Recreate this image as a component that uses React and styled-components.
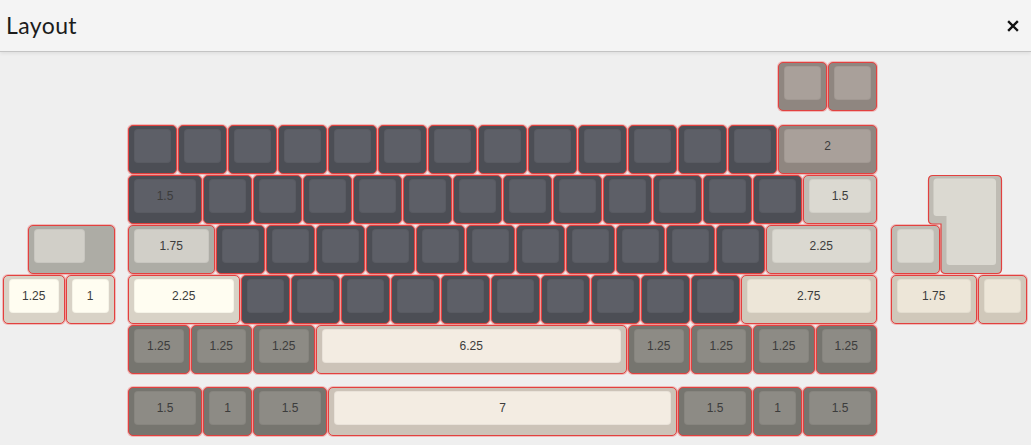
import React from 'react';
import styled, { createGlobalStyle } from 'styled-components';

const U = 50;
const X0 = 3;
const Y0 = 10;

const colors = {
  dark: { side: '#4c4e55', top: '#5d5f67' },
  taupe: { side: '#8f8680', top: '#a9a09a' },
  light: { side: '#bfbcb4', top: '#dbd9d1' },
  gray: { side: '#adaca5', top: '#d1cfc8' },
  cream: { side: '#d8d2c6', top: '#fffdf1' },
  beige: { side: '#d0c8ba', top: '#ede6d8' },
  mod: { side: '#76756f', top: '#8d8b85' },
  space: { side: '#ccc3b8', top: '#f3ece2' },
};

const row = (y, x0, list) => {
  let x = x0;
  return list.map(([w, color, label]) => {
    const k = { x, y, w, h: 1, color, label };
    x += w;
    return k;
  });
};

const darks = (n) => Array.from({ length: n }, () => [1, 'dark']);

const keys = [
  ...row(0, 15.5, [[1, 'taupe'], [1, 'taupe']]),
  ...row(1.25, 2.5, [...darks(13), [2, 'taupe', '2']]),
  ...row(2.25, 2.5, [[1.5, 'dark', '1.5'], ...darks(12), [1.5, 'light', '1.5']]),
  ...row(3.25, 2.5, [[1.75, 'gray', '1.75'], ...darks(11), [2.25, 'light', '2.25']]),
  ...row(4.25, 2.5, [[2.25, 'cream', '2.25'], ...darks(10), [2.75, 'beige', '2.75']]),
  ...row(5.25, 2.5, [
    [1.25, 'mod', '1.25'], [1.25, 'mod', '1.25'], [1.25, 'mod', '1.25'],
    [6.25, 'space', '6.25'],
    [1.25, 'mod', '1.25'], [1.25, 'mod', '1.25'], [1.25, 'mod', '1.25'], [1.25, 'mod', '1.25'],
  ]),
  ...row(6.5, 2.5, [
    [1.5, 'mod', '1.5'], [1, 'mod', '1'], [1.5, 'mod', '1.5'],
    [7, 'space', '7'],
    [1.5, 'mod', '1.5'], [1, 'mod', '1'], [1.5, 'mod', '1.5'],
  ]),
  ...row(4.25, 0, [[1.25, 'cream', '1.25'], [1, 'cream', '1']]),
  ...row(3.25, 17.75, [[1, 'light']]),
  ...row(4.25, 17.75, [[1.75, 'beige', '1.75'], [1, 'beige']]),
];

const GlobalStyle = createGlobalStyle`
  html, body {
    margin: 0;
    padding: 0;
    background: #efefef;
    font-family: "Liberation Sans", Arial, sans-serif;
  }
`;

const Page = styled.div`
  width: 1031px;
  height: 445px;
  display: flex;
  flex-direction: column;
  overflow: hidden;
  background: #efefef;
`;

const Header = styled.header`
  height: 51px;
  flex: none;
  display: flex;
  align-items: center;
  justify-content: space-between;
  padding: 0 10px 0 6px;
  background: #f4f4f4;
  border-bottom: 1px solid #c4c4c4;
  box-shadow: 0 2px 3px rgba(0, 0, 0, 0.06);
  position: relative;
  z-index: 1;
`;

const Title = styled.h1`
  margin: 0;
  font-family: Lato, "Noto Sans", sans-serif;
  font-weight: 400;
  font-size: 23px;
  letter-spacing: 0.4px;
  color: #1c1c1c;
  padding-bottom: 2px;
`;

const Close = styled.button`
  border: 0;
  background: none;
  padding: 0;
  width: 16px;
  height: 16px;
  display: flex;
  align-items: center;
  justify-content: center;
  cursor: pointer;
`;

const Canvas = styled.div`
  position: relative;
  flex: 1;
`;

const Key = styled.div`
  position: absolute;
  box-sizing: border-box;
  border-radius: 5px;
  background: ${(p) => p.$side};
  border: 1px solid #e2413f;
  box-shadow: 0 0 0 1px rgba(240, 90, 90, 0.35);
`;

const Top = styled.div`
  position: absolute;
  left: 5px;
  top: 3px;
  height: calc(100% - 13px);
  width: ${(p) => p.$width};
  box-sizing: border-box;
  border-radius: 4px;
  background: ${(p) => p.$top};
  border: 1px solid rgba(0, 0, 0, 0.04);
  display: flex;
  align-items: center;
  justify-content: center;
  font-size: 12px;
  color: #3c3c3c;
`;

const Shape = styled.svg`
  position: absolute;
  overflow: visible;
`;

const KeyCap = ({ k }) => {
  const c = colors[k.color];
  return (
    <Key
      $side={c.side}
      style={{ left: X0 + k.x * U, top: Y0 + k.y * U, width: k.w * U - 1, height: k.h * U - 1 }}
    >
      <Top $top={c.top} $width="calc(100% - 10px)">{k.label}</Top>
    </Key>
  );
};

const SteppedKey = ({ x, y }) => {
  const c = colors.gray;
  return (
    <Key $side={c.side} style={{ left: X0 + x * U, top: Y0 + y * U, width: 1.75 * U - 1, height: U - 1 }}>
      <Top $top={c.top} $width={`${1.25 * U - 12}px`} />
    </Key>
  );
};

const IsoEnter = ({ x, y }) => {
  const c = colors.light;
  const w = 1.5 * U - 1;
  const h = 2 * U - 1;
  const n = 0.25 * U;
  return (
    <Shape
      width={w}
      height={h}
      style={{ left: X0 + x * U, top: Y0 + y * U }}
    >
      <path
        d={`M5 0.5 H${w - 5} Q${w - 0.5} 0.5 ${w - 0.5} 5 V${h - 5} Q${w - 0.5} ${h - 0.5} ${w - 5} ${h - 0.5} H${n + 5} Q${n + 0.5} ${h - 0.5} ${n + 0.5} ${h - 5} V${U - 1} H5 Q0.5 ${U - 1} 0.5 ${U - 5} V5 Q0.5 0.5 5 0.5 Z`}
        fill={c.side}
        stroke="#e2413f"
        strokeWidth="1.2"
      />
      <path
        d={`M9 3.5 H${w - 10} Q${w - 6} 3.5 ${w - 6} 7 V${h - 12} Q${w - 6} ${h - 9} ${w - 9} ${h - 9} H${n + 9} Q${n + 6} ${h - 9} ${n + 6} ${h - 12} V${U - 9} H8.5 Q5.5 ${U - 9} 5.5 ${U - 12} V7 Q5.5 3.5 9 3.5 Z`}
        fill={c.top}
      />
    </Shape>
  );
};

export default function App() {
  return (
    <>
      <GlobalStyle />
      <Page>
        <Header>
          <Title>Layout</Title>
          <Close aria-label="close">
            <svg width="12" height="12" viewBox="0 0 12 12">
              <path d="M2 2 L10 10 M10 2 L2 10" stroke="#111" strokeWidth="2.4" strokeLinecap="square" />
            </svg>
          </Close>
        </Header>
        <Canvas>
          {keys.map((k, i) => (
            <KeyCap key={i} k={k} />
          ))}
          <SteppedKey x={0.5} y={3.25} />
          <IsoEnter x={18.5} y={2.25} />
        </Canvas>
      </Page>
    </>
  );
}
